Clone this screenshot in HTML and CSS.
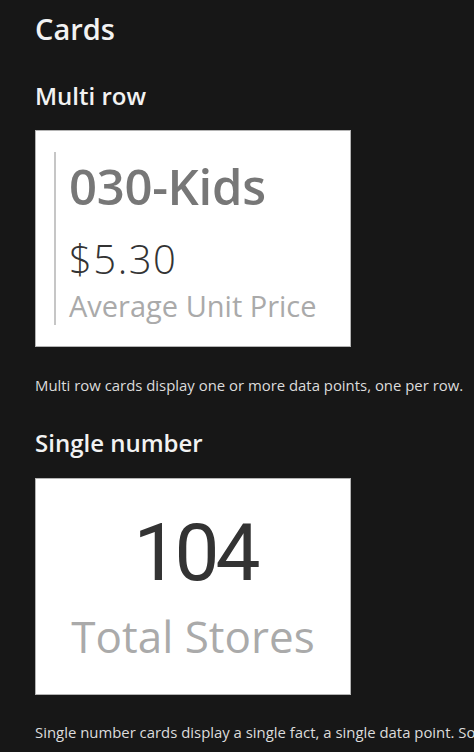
FILE: index.html
```html
<!DOCTYPE html>
<html>
<head>
<meta charset="utf-8">
<link rel="stylesheet" href="styles.css">
</head>
<body>
<main class="page">
  <h1 class="title">Cards</h1>
  <h2 class="subtitle sub-multi">Multi row</h2>
  <div class="card card-multi">
    <div class="rowgroup">
      <div class="mr-title">030-Kids</div>
      <div class="mr-value">$5.30</div>
      <div class="mr-label">Average Unit Price</div>
    </div>
  </div>
  <p class="desc desc1">Multi row cards display one or more data points, one per row.</p>
  <h2 class="subtitle sub-single">Single number</h2>
  <div class="card card-single">
    <div class="sn-value">104</div>
    <div class="sn-label">Total Stores</div>
  </div>
  <p class="desc desc2">Single number cards display a single fact, a single data point. Sometimes you want to track just one number.</p>
</main>
</body>
</html>
```
FILE: styles.css
```css
html, body {
  margin: 0;
  padding: 0;
  background: #171717;
  overflow: hidden;
  width: 474px;
  height: 752px;
}
.page {
  padding: 0 0 0 35px;
  font-family: "Open Sans", "Noto Sans", sans-serif;
  color: #f2f2f2;
  overflow: hidden;
  height: 752px;
  box-sizing: border-box;
}
.title {
  margin: 0;
  padding-top: 11px;
  font-size: 29px;
  font-weight: 600;
  line-height: 36px;
}
.subtitle {
  margin: 0;
  font-size: 24px;
  font-weight: 600;
  line-height: 30px;
}
.sub-multi { margin-top: 34px; }
.sub-single { margin-top: 33px; }
.card {
  box-sizing: border-box;
  width: 316px;
  height: 217px;
  background: #fff;
  border: 1px solid #b4b4b4;
  margin-top: 19px;
}
.sub-single + .card { margin-top: 20px; }
.card-multi {
  padding: 21px 0 0 18px;
}
.rowgroup {
  border-left: 2px solid #c6c6c6;
  padding: 4px 0 0 13px;
  height: 173px;
  box-sizing: border-box;
}
.mr-title {
  font-size: 49px;
  font-weight: 600;
  color: #777;
  line-height: 60px;
  letter-spacing: -0.3px;
}
.mr-value {
  font-size: 40px;
  font-weight: 300;
  color: #333;
  line-height: 46px;
  margin-top: 20px;
  letter-spacing: 1.5px;
}
.mr-label {
  font-size: 29px;
  color: #aaa;
  line-height: 36px;
  margin-top: 6px;
}
.desc {
  margin: 0;
  font-size: 14.9px;
  line-height: 20px;
  color: #dcdcdc;
  white-space: nowrap;
}
.desc1 { margin-top: 28px; }
.desc2 { margin-top: 27px; }
.card-single {
  display: flex;
  flex-direction: column;
  align-items: center;
  padding-top: 29px;
}
.sn-value {
  font-family: Roboto, sans-serif;
  font-size: 80px;
  line-height: 90px;
  color: #333;
  letter-spacing: -4px;
  padding-left: 4px;
}
.sn-label {
  font-size: 44px;
  color: #aaa;
  line-height: 56px;
  margin-top: 10px;
}
```
